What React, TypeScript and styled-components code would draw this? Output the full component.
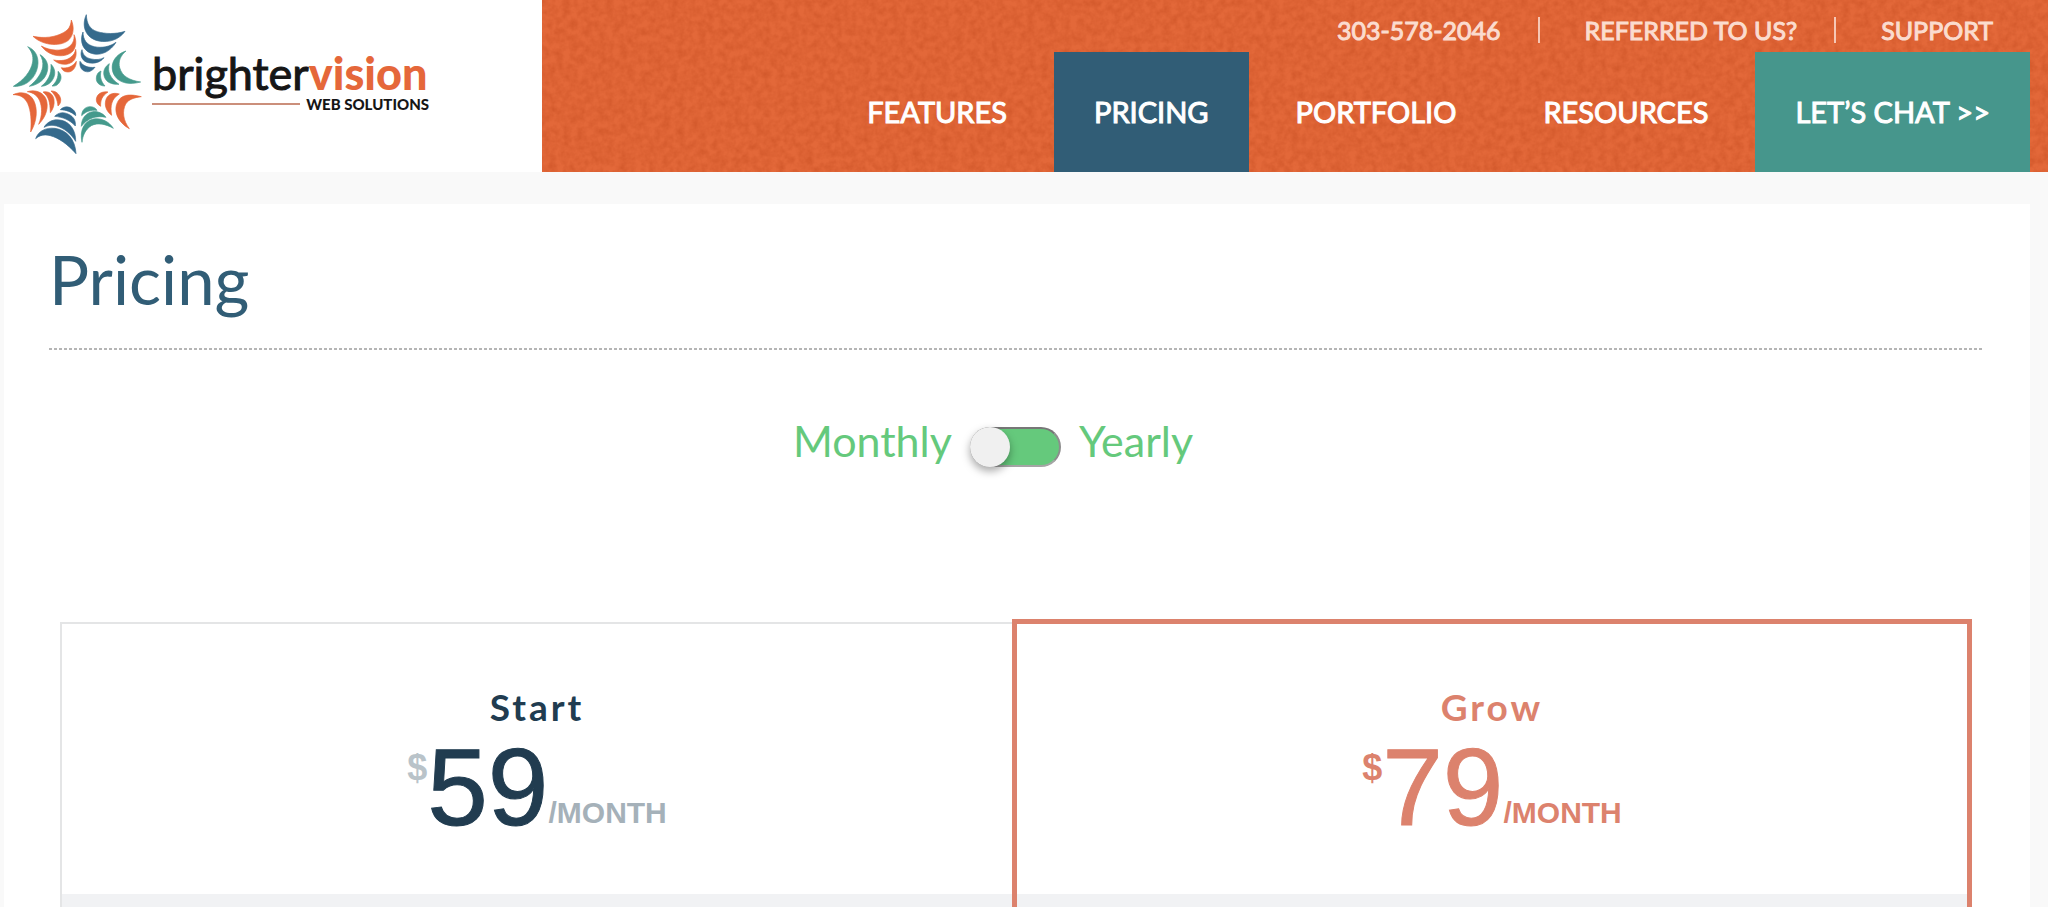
import React from "react";
import styled, { createGlobalStyle } from "styled-components";

const Global = createGlobalStyle`
  *, *::before, *::after { box-sizing: border-box; }
  body { margin: 0; background: #f9f9f9; font-family: Lato, "Open Sans", sans-serif; }
`;

const sans = `"Liberation Sans", Arial, sans-serif`;

const Page = styled.div`
  height: 100vh;
  overflow: hidden;
`;

const Header = styled.header`
  display: flex;
  min-height: 172px;
  background: #fff;
`;

const Brand = styled.a`
  flex: 0 0 542px;
  display: flex;
  align-items: flex-start;
  gap: 10px;
  padding: 12px 0 0 10px;
  background: #fff;
  color: #161616;
  text-decoration: none;
`;

const Wordmark = styled.span`
  display: flex;
  flex-direction: column;
  width: 277px;
  padding-top: 38px;
`;

const BrandName = styled.span`
  display: flex;
  font-size: 45px;
  line-height: 46px;
  white-space: nowrap;
`;

const BrandPlain = styled.span`
  -webkit-text-stroke: 1px #161616;
`;

const BrandAccent = styled.b`
  color: #e5673a;
  font-weight: 900;
`;

const Tagline = styled.span`
  display: flex;
  align-items: center;
  gap: 6px;
  font-size: 15px;
  line-height: 16px;
  font-weight: 900;
  white-space: nowrap;
  &::before {
    content: "";
    flex: 1;
    height: 2px;
    background: #cb8f7b;
  }
`;

const Banner = styled.div`
  position: relative;
  flex: 1;
  display: flex;
  flex-direction: column;
  align-items: flex-end;
  padding-right: 18px;
  background: #e36839;
`;

const Texture = styled.svg`
  position: absolute;
  inset: 0;
  width: 100%;
  height: 100%;
`;

const TopLinks = styled.nav`
  position: relative;
  display: flex;
  align-items: center;
  height: 52px;
  padding: 8px 0 0;
`;

const TopLink = styled.a`
  padding: 0 37px 0 45px;
  font-size: 25px;
  line-height: 26px;
  color: #fbdccf;
  text-decoration: none;
  -webkit-text-stroke: 1px #fbdccf;
  & + & { border-left: 2px solid #f6c7b5; }
`;

const MainNav = styled.nav`
  position: relative;
  display: flex;
  flex: 1;
  gap: 7px;
`;

const NavLink = styled.a<{ $bg?: string }>`
  display: flex;
  align-items: center;
  padding: 0 40px 2px;
  font-size: 29px;
  color: #fff;
  -webkit-text-stroke: 1px #fff;
  text-decoration: none;
  background: ${(p) => p.$bg ?? "transparent"};
`;

const Content = styled.main`
  margin: 32px 18px 0 4px;
  padding: 34px 47px 0 45px;
  background: #fff;
  min-height: calc(100vh - 204px);
`;

const Title = styled.h1`
  margin: 0;
  font-size: 67px;
  line-height: 82px;
  font-weight: 400;
  color: #315d76;
`;

const Rule = styled.hr`
  height: 2px;
  margin: 28px 0 0;
  border: 0;
  background: repeating-linear-gradient(90deg, #b5b5b5 0 3px, #fff 3px 5px);
`;

const Billing = styled.label`
  display: flex;
  justify-content: center;
  align-items: center;
  gap: 18px;
  margin: 64px 46px 0 0;
  font-size: 43px;
  line-height: 54px;
  color: #65c97c;
`;

const Switch = styled.input`
  appearance: none;
  width: 91px;
  height: 40px;
  margin: 12px 0 0;
  border-radius: 20px;
  background: #65c97c;
  border: 2px solid;
  border-color: #777 #8d8d8d #a5a5a5;
  display: flex;
  &::before {
    content: "";
    width: 40px;
    height: 40px;
    margin: -2px;
    border-radius: 50%;
    background: #f0f0f0;
    box-shadow: 0 4px 8px rgba(0, 0, 0, 0.35);
  }
  &:checked { justify-content: flex-end; }
`;

const Plans = styled.section`
  display: grid;
  grid-template-columns: 952fr 960fr;
  align-items: start;
  margin: 151px 11px 0;
`;

const Plan = styled.article<{ $featured?: boolean }>`
  display: flex;
  flex-direction: column;
  align-items: center;
  margin-top: ${(p) => (p.$featured ? 0 : 3)}px;
  padding-top: 56px;
  border: ${(p) => (p.$featured ? "5px solid #dc826d" : "2px solid #e4e5e6")};
  border-bottom: 0;
  border-right-width: ${(p) => (p.$featured ? 5 : 0)}px;
  color: ${(p) => (p.$featured ? "#dc826d" : "#213c50")};
`;

const PlanName = styled.h2`
  margin: 0;
  font-size: 37px;
  line-height: 54px;
  font-weight: 700;
  letter-spacing: 3px;
`;

const Price = styled.p`
  display: flex;
  margin: 0;
  font-family: ${sans};
  font-size: 109px;
  line-height: 106px;
`;

const Amount = styled.span`
  -webkit-text-stroke: 1px currentColor;
`;

const Currency = styled.span<{ $muted?: boolean }>`
  font-size: 36px;
  line-height: 68px;
  font-weight: 700;
  color: ${(p) => (p.$muted ? "#b9c3c9" : "inherit")};
`;

const Period = styled(Currency)`
  align-self: flex-end;
  font-size: 30px;
  line-height: 54px;
  color: ${(p) => (p.$muted ? "#a5b1b9" : "inherit")};
`;

const FeatureBand = styled.div`
  align-self: stretch;
  height: 60px;
  margin-top: 54px;
  background: #f1f2f4;
`;

const ORANGE = "#e5673a";
const BLUE = "#356a8c";
const TEAL = "#459a8c";

const webShapes: [string, string][] = [
  [ORANGE, "M214 60C223 82 221 103 208 118C188 140 132 140 99 109C133 116 165 112 190 98C207 89 212 78 214 60Z"],
  [ORANGE, "M222 104C230 120 229 140 219 153C200 174 150 174 124 138C150 153 184 154 203 143C218 134 224 120 222 104Z"],
  [ORANGE, "M227 148C231 165 227 183 211 189C195 197 174 192 161 180C182 184 202 181 213 171C222 164 225 158 227 148Z"],
  [ORANGE, "M229 184C229 199 220 216 204 216C194 216 187 211 184 203C200 207 219 200 229 184Z"],
  [BLUE, "M259 44C260 72 270 88 292 95C315 102 347 103 375 94C357 119 327 129 296 123C255 114 244 76 259 44Z"],
  [BLUE, "M249 96C249 119 260 135 283 140C305 145 330 140 348 127C332 153 307 166 282 162C250 157 237 125 249 96Z"],
  [BLUE, "M246 149C248 164 258 174 273 177C288 180 302 179 312 173C302 186 286 191 269 189C247 186 238 166 246 149Z"],
  [BLUE, "M240 184C249 198 264 204 285 202C276 213 266 218 255 214C243 210 238 198 240 184Z"],
  [TEAL, "M83 140C103 148 115 166 114 190C113 221 91 251 61 257C53 259 47 260 40 259C71 240 93 215 98 186C101 167 94 152 83 140Z"],
  [TEAL, "M120 164C138 174 147 192 142 213C137 237 117 254 88 259C110 241 124 222 128 201C130 188 127 174 120 164Z"],
  [TEAL, "M153 193C165 204 168 222 159 237C152 250 139 258 124 259C143 244 155 224 153 193Z"],
  [TEAL, "M174 214C184 222 186 235 179 246C173 256 165 259 156 258C168 248 176 232 174 214Z"],
  [TEAL, "M378 153C361 167 354 185 359 203C366 229 389 241 422 246C389 255 360 250 345 229C326 200 340 165 378 153Z"],
  [TEAL, "M328 191C321 214 330 235 357 253C334 254 318 246 313 230C308 214 314 200 328 191Z"],
  [TEAL, "M303 213C299 230 303 245 315 258C297 258 288 246 289 234C289 224 295 216 303 213Z"],
  [ORANGE, "M39 284C66 272 90 280 101 301C114 327 111 365 92 396C95 363 93 332 83 310C75 293 61 284 39 284Z"],
  [ORANGE, "M82 275C105 268 129 276 138 297C147 320 139 350 116 373C127 347 127 321 119 302C112 287 101 278 82 275Z"],
  [ORANGE, "M129 276C146 272 160 283 162 299C164 313 160 327 151 338C150 306 147 291 129 276Z"],
  [ORANGE, "M153 273C167 272 179 282 182 297C183 306 180 313 174 318C172 299 166 285 153 273Z"],
  [ORANGE, "M424 290C395 283 369 281 355 302C337 332 354 367 388 386C369 361 366 334 377 312C386 298 402 293 424 290Z"],
  [ORANGE, "M358 282C338 276 321 284 317 302C313 320 321 335 335 346C330 319 334 296 358 282Z"],
  [ORANGE, "M324 276C304 273 291 283 289 297C288 306 293 314 302 319C301 301 306 288 324 276Z"],
  [BLUE, "M107 416C115 392 139 382 165 385C201 390 226 419 228 461C202 432 177 414 151 407C133 402 118 406 107 416Z"],
  [BLUE, "M132 382C143 363 163 356 185 361C211 367 228 393 227 424C213 401 193 385 170 378C155 374 143 376 132 382Z"],
  [BLUE, "M164 349C176 337 191 335 206 343C221 350 228 363 226 378C210 360 188 351 164 349Z"],
  [BLUE, "M181 329C192 318 207 318 218 328C225 334 228 340 227 347C214 335 199 330 181 329Z"],
  [TEAL, "M246 427C238 391 253 362 281 357C306 353 328 366 340 385C317 372 293 367 274 377C256 388 248 407 246 427Z"],
  [TEAL, "M244 379C244 354 259 338 278 335C296 333 311 342 318 352C290 346 264 353 244 379Z"],
  [TEAL, "M245 347C245 331 256 320 270 320C280 320 287 324 291 331C271 330 258 334 245 347Z"],
];

const WebMark = () => (
  <svg width="132" height="142" viewBox="30 36 396 426" aria-hidden="true">
    {webShapes.map(([fill, d]) => (
      <path key={d} d={d} fill={fill} stroke={fill} strokeWidth="2" />
    ))}
  </svg>
);

const plans = [
  { name: "Start", price: 59, featured: false },
  { name: "Grow", price: 79, featured: true },
];

export default function App() {
  return (
    <Page>
      <Global />
      <Header>
        <Brand href="#" aria-label="brightervision web solutions">
          <WebMark />
          <Wordmark>
            <BrandName>
              <BrandPlain>brighter</BrandPlain>
              <BrandAccent>vision</BrandAccent>
            </BrandName>
            <Tagline>WEB SOLUTIONS</Tagline>
          </Wordmark>
        </Brand>
        <Banner>
          <Texture aria-hidden="true">
            <filter id="grain" x="0" y="0" width="100%" height="100%" colorInterpolationFilters="sRGB">
              <feTurbulence type="fractalNoise" baseFrequency="0.14" numOctaves="3" seed="4" />
              <feColorMatrix values="0 0 0 0 0.72  0 0 0 0 0.25  0 0 0 0 0.08  0.6 0 0 0 -0.18" />
            </filter>
            <rect width="100%" height="100%" filter="url(#grain)" />
          </Texture>
          <TopLinks aria-label="Contact">
            <TopLink href="#">303-578-2046</TopLink>
            <TopLink href="#">REFERRED TO US?</TopLink>
            <TopLink href="#">SUPPORT</TopLink>
          </TopLinks>
          <MainNav aria-label="Main">
            <NavLink href="#">FEATURES</NavLink>
            <NavLink href="#" $bg="#315d76">PRICING</NavLink>
            <NavLink href="#">PORTFOLIO</NavLink>
            <NavLink href="#">RESOURCES</NavLink>
            <NavLink href="#" $bg="#46968c">LET’S CHAT &gt;&gt;</NavLink>
          </MainNav>
        </Banner>
      </Header>
      <Content>
        <Title>Pricing</Title>
        <Rule />
        <Billing>
          Monthly
          <Switch type="checkbox" role="switch" />
          Yearly
        </Billing>
        <Plans>
          {plans.map((plan) => (
            <Plan key={plan.name} $featured={plan.featured}>
              <PlanName>{plan.name}</PlanName>
              <Price>
                <Currency $muted={!plan.featured}>$</Currency>
                <Amount>{plan.price}</Amount>
                <Period $muted={!plan.featured}>/MONTH</Period>
              </Price>
              <FeatureBand />
            </Plan>
          ))}
        </Plans>
      </Content>
    </Page>
  );
}
